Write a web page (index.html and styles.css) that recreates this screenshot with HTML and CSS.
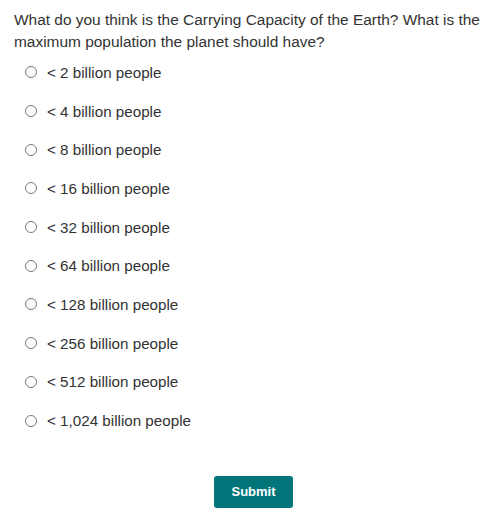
FILE: index.html
```html
<!DOCTYPE html>
<html>
<head>
<meta charset="utf-8">
<link rel="stylesheet" href="styles.css">
</head>
<body>
<div class="quiz">
  <p class="question">What do you think is the Carrying Capacity of the Earth? What is the maximum population the planet should have?</p>
  <div class="options">
    <label class="option"><span class="radio"></span><span class="label">&lt; 2 billion people</span></label>
    <label class="option"><span class="radio"></span><span class="label">&lt; 4 billion people</span></label>
    <label class="option"><span class="radio"></span><span class="label">&lt; 8 billion people</span></label>
    <label class="option"><span class="radio"></span><span class="label">&lt; 16 billion people</span></label>
    <label class="option"><span class="radio"></span><span class="label">&lt; 32 billion people</span></label>
    <label class="option"><span class="radio"></span><span class="label">&lt; 64 billion people</span></label>
    <label class="option"><span class="radio"></span><span class="label">&lt; 128 billion people</span></label>
    <label class="option"><span class="radio"></span><span class="label">&lt; 256 billion people</span></label>
    <label class="option"><span class="radio"></span><span class="label">&lt; 512 billion people</span></label>
    <label class="option"><span class="radio"></span><span class="label">&lt; 1,024 billion people</span></label>
  </div>
  <div class="actions">
    <button class="submit" type="button">Submit</button>
  </div>
</div>
</body>
</html>
```
FILE: styles.css
```css
html, body {
  margin: 0;
  padding: 0;
  background: #ffffff;
}
body {
  font-family: "Liberation Sans", Arial, sans-serif;
  color: #333333;
}
.quiz {
  width: 479px;
  padding: 9px 0 0 14px;
}
.question {
  margin: 0;
  font-size: 15.45px;
  line-height: 22px;
  color: #333333;
}
.options {
  display: flex;
  flex-direction: column;
}
.option {
  display: flex;
  align-items: center;
  height: 38.7px;
  padding-left: 11px;
}
.radio {
  width: 10px;
  height: 10px;
  border: 1px solid #7a7a7a;
  border-radius: 50%;
  flex: none;
}
.label {
  margin-left: 10px;
  font-size: 15.2px;
  color: #333333;
}
.actions {
  display: flex;
  justify-content: center;
  margin-top: 36px;
}
.submit {
  width: 79px;
  height: 32px;
  border: none;
  border-radius: 3px;
  background: #00767b;
  color: #ffffff;
  font-family: "Liberation Sans", Arial, sans-serif;
  font-weight: bold;
  font-size: 13px;
}
```
